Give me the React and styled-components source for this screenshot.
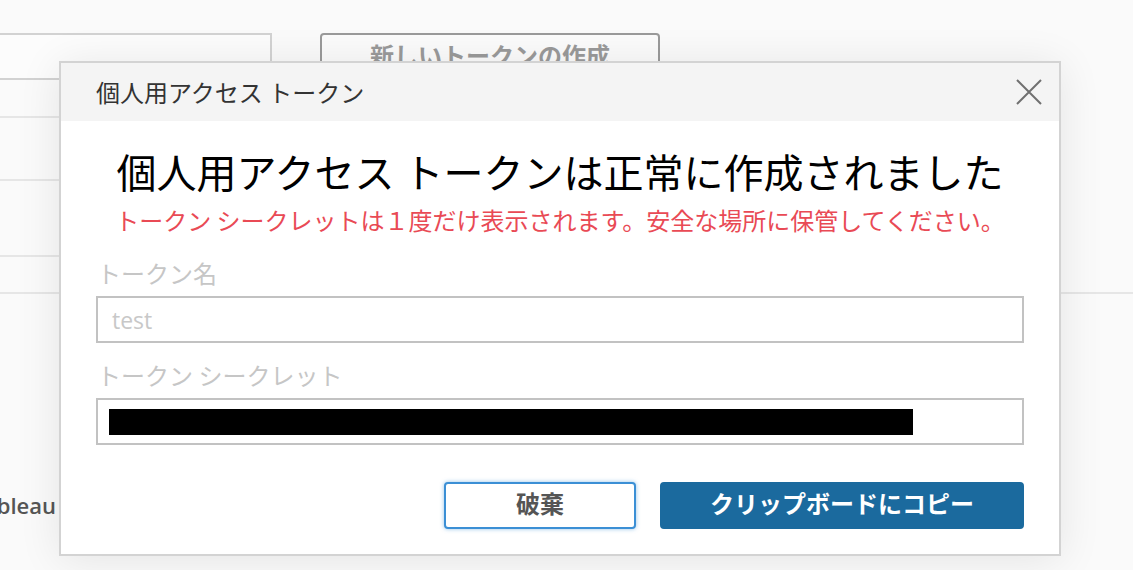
import React from "react";
import styled, { createGlobalStyle } from "styled-components";

const JP = `"Noto Sans CJK JP", "Noto Sans", sans-serif`;
const LATIN = `"Open Sans", "Noto Sans", "Noto Sans CJK JP", sans-serif`;

const Global = createGlobalStyle`
  html, body { margin: 0; padding: 0; }
  body { font-family: ${JP}; background: #fafafa; }
  * { box-sizing: border-box; }
`;

const Page = styled.div`
  position: relative;
  width: 100%;
  height: 100vh;
  overflow: hidden;
  background: #fafafa;
  display: flex;
  flex-direction: column;
  padding-top: 33px;
`;

const TopArea = styled.div`
  display: flex;
  align-items: flex-start;
  gap: 48px;
`;

const ListPanel = styled.div`
  width: 272px;
  display: flex;
  flex-direction: column;
`;

const SearchBox = styled.div`
  height: 47px;
  border: 2px solid #d2d2d2;
  border-left: none;
  background: #fcfcfc;
`;

const ListRow = styled.div`
  height: ${(p) => p.$h}px;
  border-bottom: 2px solid #e6e6e6;
`;

const NewTokenButton = styled.button`
  width: 340px;
  height: 48px;
  border: 2px solid #9a9a9a;
  border-radius: 4px;
  background: #fbfbfb;
  color: #9a9a9a;
  font-family: ${JP};
  font-size: 24px;
  font-weight: 700;
  line-height: 1;
  padding: 0 0 4px;
`;

const Divider = styled.div`
  margin-top: 35px;
  height: 2px;
  background: #e6e6e6;
`;

/* Nav label that runs off the left edge of the viewport */
const ClipText = styled.div`
  margin-top: 196px;
  width: 56px;
  display: flex;
  justify-content: flex-end;
  overflow: hidden;
  white-space: nowrap;
  font-family: ${LATIN};
  font-size: 22px;
  font-weight: 600;
  color: #555;
  line-height: 30px;
`;

const Dialog = styled.div`
  position: absolute;
  left: 59px;
  top: 61px;
  width: 1002px;
  background: #fff;
  border: 2px solid #d3d3d3;
  box-shadow: 0 4px 40px rgba(0, 0, 0, 0.09);
  display: flex;
  flex-direction: column;
`;

const Header = styled.div`
  height: 58px;
  background: #f4f4f4;
  display: flex;
  align-items: center;
  justify-content: space-between;
  padding: 0 17px 0 35px;
`;

const HeaderTitle = styled.div`
  font-family: ${JP};
  font-size: 24px;
  color: #333;
  line-height: 30px;
`;

const CloseButton = styled.button`
  width: 26px;
  height: 26px;
  border: none;
  background: none;
  padding: 0;
  display: flex;
  align-items: center;
  justify-content: center;
`;

const Body = styled.div`
  padding: 26px 35px 25px 35px;
  display: flex;
  flex-direction: column;
`;

const Heading = styled.h1`
  margin: 0;
  text-align: center;
  font-family: ${JP};
  font-weight: 400;
  font-size: 40px;
  line-height: 48px;
  color: #000;
`;

const Warning = styled.p`
  margin: 10px 0 0;
  text-align: center;
  font-family: ${JP};
  font-size: 24px;
  line-height: 30px;
  color: #e94a55;
`;

const Field = styled.div`
  display: flex;
  flex-direction: column;
  gap: 8px;
  margin-top: ${(p) => p.$top}px;
`;

const Label = styled.label`
  font-family: ${JP};
  font-size: 24px;
  line-height: 30px;
  color: #c6c6c6;
  padding-left: 1px;
`;

const InputBox = styled.div`
  height: 47px;
  border: 2px solid #c2c2c2;
  background: #fff;
  display: flex;
  align-items: center;
  padding: 0 14px;
  font-family: ${LATIN};
  font-size: 23px;
  color: #c8c8c8;
`;

const SecretBox = styled(InputBox)`
  padding: 0 11px;
`;

const Redaction = styled.div`
  width: 804px;
  height: 26px;
  background: #000;
`;

const Actions = styled.div`
  margin-top: 37px;
  display: flex;
  justify-content: flex-end;
  gap: 24px;
`;

const ActionButton = styled.button`
  width: ${(p) => p.$w}px;
  height: 47px;
  border-radius: 4px;
  font-family: ${JP};
  font-size: 24px;
  font-weight: 700;
  line-height: 1;
  padding: 0 0 6px;
  cursor: pointer;
  border: 2px solid ${(p) => (p.$primary ? "#1b6a9e" : "#3b8fd5")};
  background: ${(p) => (p.$primary ? "#1b6a9e" : "#fff")};
  color: ${(p) => (p.$primary ? "#fff" : "#555")};
  box-shadow: ${(p) => (p.$primary ? "none" : "0 0 4px rgba(59, 143, 213, 0.55)")};
`;

function CloseIcon() {
  return (
    <svg width="26" height="26" viewBox="0 0 26 26" fill="none">
      <path d="M1 1 L25 25 M25 1 L1 25" stroke="#707070" strokeWidth="2" />
    </svg>
  );
}

export default function App() {
  return (
    <>
      <Global />
      <Page>
        <TopArea>
          <ListPanel>
            <SearchBox />
            <ListRow $h={38} />
            <ListRow $h={63} />
            <ListRow $h={76} />
          </ListPanel>
          <NewTokenButton>新しいトークンの作成</NewTokenButton>
        </TopArea>
        <Divider />
        <ClipText>
          <span>Tableau</span>
        </ClipText>

        <Dialog role="dialog" aria-modal="true">
          <Header>
            <HeaderTitle>個人用アクセス トークン</HeaderTitle>
            <CloseButton aria-label="閉じる">
              <CloseIcon />
            </CloseButton>
          </Header>
          <Body>
            <Heading>個人用アクセス トークンは正常に作成されました</Heading>
            <Warning>
              トークン シークレットは１度だけ表示されます。安全な場所に保管してください。
            </Warning>
            <Field $top={23}>
              <Label>トークン名</Label>
              <InputBox>test</InputBox>
            </Field>
            <Field $top={17}>
              <Label>トークン シークレット</Label>
              <SecretBox>
                <Redaction />
              </SecretBox>
            </Field>
            <Actions>
              <ActionButton $w={192}>破棄</ActionButton>
              <ActionButton $w={364} $primary>
                クリップボードにコピー
              </ActionButton>
            </Actions>
          </Body>
        </Dialog>
      </Page>
    </>
  );
}
